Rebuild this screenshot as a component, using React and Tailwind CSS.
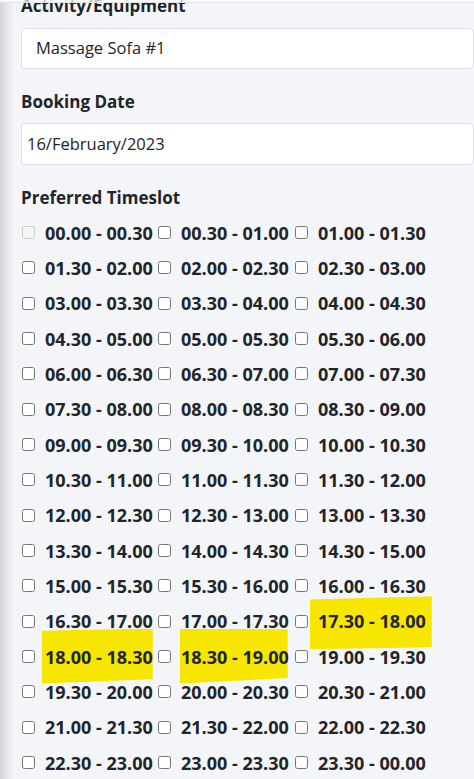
import React from 'react';

const pad = (n) => String(n).padStart(2, '0');

// 48 half-hour slots, 00.00 - 00.30 ... 23.30 - 00.00
const slots = Array.from({ length: 48 }, (_, i) => {
  const from = `${pad(Math.floor(i / 2))}.${i % 2 ? '30' : '00'}`;
  const j = (i + 1) % 48;
  const to = `${pad(Math.floor(j / 2))}.${j % 2 ? '30' : '00'}`;
  return `${from} - ${to}`;
});

// hand-drawn highlighter marks, keyed by slot label
const marks = {
  '17.30 - 18.00': 'left-[-8px] right-[-6px] top-[-16px] bottom-[-19px] [clip-path:polygon(0_6%,100%_0,100%_96%,0_100%)]',
  '18.00 - 18.30': 'left-[-3px] right-[0px] top-[-19px] bottom-[-18px] [clip-path:polygon(0_4%,100%_0,100%_92%,0_100%)]',
  '18.30 - 19.00': 'left-[-1px] right-[1px] top-[-19px] bottom-[-18px] [clip-path:polygon(0_0,100%_1%,100%_90%,0_100%)]',
};

const Slot = ({ label, disabled }) => (
  <label className="flex items-center h-[35.33px]">
    <input
      type="checkbox"
      disabled={disabled}
      className="w-[13px] h-[13px] m-0 mr-[10px] ml-px shrink-0"
    />
    <span className="relative text-[18px] font-bold text-[#212529] leading-none">
      {marks[label] && (
        <span className={`absolute bg-[#f6e600] ${marks[label]}`} />
      )}
      <span className="relative">{label}</span>
    </span>
  </label>
);

export default function App() {
  return (
    <div
      className="relative flex w-[474px] h-[779px] overflow-hidden bg-[#f4f5f9]"
      style={{ fontFamily: '"Open Sans", "Noto Sans", sans-serif' }}
    >
      {/* sidebar shadow */}
      <div className="w-[14px] shrink-0 bg-gradient-to-r from-[#d4d4d8] via-[#e6e6ea] to-[#f4f5f9]" />

      <div className="flex-1 pl-[7px] -mt-[6px]">
        <div className="text-[17px] font-bold text-[#212529] leading-[24px]">Activity/Equipment</div>
        <div className="mt-[10px] h-[41px] flex items-center px-[14px] bg-white border border-[#dee2e6] rounded-[4px] text-[16.5px] text-[#212529]">
          Massage Sofa #1
        </div>

        <div className="mt-[21px] text-[17px] font-bold text-[#212529] leading-[24px]">Booking Date</div>
        <div className="mt-[9px] h-[42px] flex items-center px-[5px] bg-white border border-[#dee2e6] rounded-[4px] text-[16.5px] text-[#212529]">
          16/February/2023
        </div>

        <div className="mt-[21px] text-[17px] font-bold text-[#212529] leading-[24px]">Preferred Timeslot</div>
        <div className="mt-[5px] grid grid-cols-[136px_137px_136px]">
          {slots.map((s, i) => (
            <Slot key={s} label={s} disabled={i === 0} />
          ))}
        </div>
      </div>

      {/* top edge of the scroll area */}
      <div className="absolute top-0 left-0 right-0 h-[3px] border-b border-[#e2e3e7] bg-white/70" />
    </div>
  );
}
